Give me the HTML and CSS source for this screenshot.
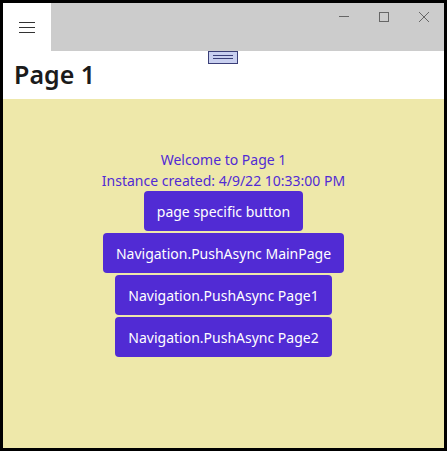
FILE: index.html
```html
<!DOCTYPE html>
<html>
<head>
<meta charset="utf-8">
<link rel="stylesheet" href="styles.css">
</head>
<body>
<div class="window">
  <header class="header">
    <div class="topbar">
      <div class="menu-btn">
        <svg width="16" height="11" viewBox="0 0 16 11"><path d="M0 0.5H16M0 5.5H16M0 10.5H16" stroke="#333" stroke-width="1"/></svg>
      </div>
      <div class="titlebar">
        <div class="controls">
          <svg class="ctl" width="10" height="10" viewBox="0 0 10 10"><path d="M0 4.5H10" stroke="#666" stroke-width="1"/></svg>
          <svg class="ctl" width="10" height="10" viewBox="0 0 10 10"><rect x="0.5" y="0.5" width="9" height="9" fill="none" stroke="#666" stroke-width="1"/></svg>
          <svg class="ctl" width="10" height="10" viewBox="0 0 10 10"><path d="M0 0L10 10M10 0L0 10" stroke="#666" stroke-width="1"/></svg>
        </div>
      </div>
    </div>
    <div class="title-row">
      <h1 class="page-title">Page 1</h1>
    </div>
    <div class="grip">
      <svg width="30" height="13" viewBox="0 0 30 13"><rect x="0.5" y="0.5" width="29" height="12" fill="#c9d0f0" stroke="#3b3f78"/><path d="M5 4.5H25M5 7.5H25" stroke="#3b3f78" stroke-width="1"/></svg>
    </div>
  </header>
  <main class="content">
    <p class="label">Welcome to Page 1</p>
    <p class="label">Instance created: 4/9/22 10:33:00 PM</p>
    <div class="buttons">
      <button class="btn">page specific button</button>
      <button class="btn">Navigation.PushAsync MainPage</button>
      <button class="btn">Navigation.PushAsync Page1</button>
      <button class="btn">Navigation.PushAsync Page2</button>
    </div>
  </main>
</div>
</body>
</html>
```
FILE: styles.css
```css
html, body {
  margin: 0;
  padding: 0;
  background: #000;
  height: 100%;
}
body {
  font-family: "Noto Sans", "Open Sans", sans-serif;
}
.window {
  box-sizing: border-box;
  width: 447px;
  height: 451px;
  border: 3px solid #000;
  display: flex;
  flex-direction: column;
  background: #fff;
}
.header {
  position: relative;
  background: #fff;
  flex: 0 0 auto;
}
.topbar {
  display: flex;
  height: 48px;
}
.menu-btn {
  width: 48px;
  display: flex;
  align-items: center;
  justify-content: center;
  background: #fff;
}
.titlebar {
  flex: 1;
  background: #cccccc;
  display: flex;
  justify-content: flex-end;
}
.controls {
  display: flex;
  gap: 30px;
  padding: 9px 15px 0 0;
  align-items: flex-start;
}
.ctl {
  display: block;
}
.title-row {
  height: 48px;
  display: flex;
  align-items: center;
  padding-left: 11px;
}
.page-title {
  margin: 0;
  font-size: 25px;
  font-weight: 600;
  color: #1b1b1b;
  line-height: 1;
  position: relative;
  top: -1px;
}
.grip {
  position: absolute;
  left: 205px;
  top: 48px;
  line-height: 0;
}
.content {
  flex: 1;
  background: #eee8aa;
  display: flex;
  flex-direction: column;
  align-items: center;
  padding-top: 50px;
}
.label {
  margin: 0;
  color: #512bd4;
  font-size: 14px;
  line-height: 21px;
}
.buttons {
  display: flex;
  flex-direction: column;
  align-items: center;
  gap: 2px;
}
.btn {
  font-family: "Noto Sans", "Open Sans", sans-serif;
  font-size: 14px;
  height: 40px;
  padding: 0 13px;
  border: none;
  border-radius: 4px;
  background: #512bd4;
  color: #fff;
}
```
